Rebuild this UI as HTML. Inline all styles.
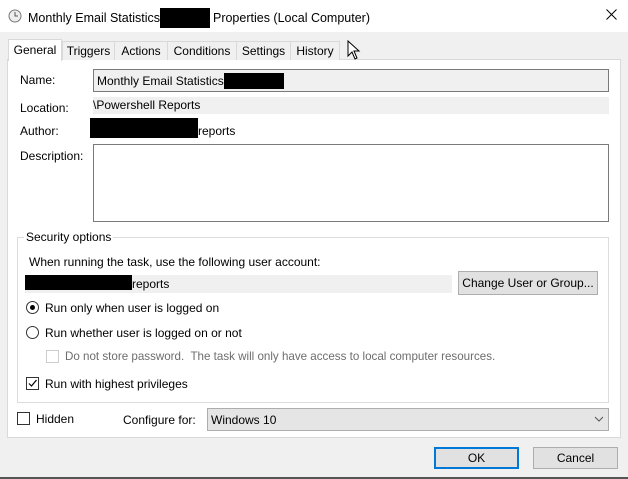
<!DOCTYPE html><html><head><style>
*{box-sizing:border-box;margin:0;padding:0}
body{width:628px;height:479px;background:#f0f0f0;font-family:"Liberation Sans",sans-serif;font-size:12px;color:#000;position:relative;overflow:hidden}
.a{position:absolute;white-space:nowrap}
.tab{position:absolute;top:41px;height:19px;border:1px solid #d9d9d9;border-bottom:none;background:#f0f0f0;text-align:center;line-height:18px}
.btn{position:absolute;background:#e1e1e1;border:1px solid #adadad;text-align:center}
.cb{position:absolute;width:13px;height:13px;border:1px solid #333;background:#fff}
.rb{position:absolute;width:13px;height:13px;border:1px solid #333;border-radius:50%;background:#fff}
</style></head><body>
<div class="a" style="left:0;top:0;width:628px;height:32px;background:#fff"></div>
<svg class="a" style="left:8px;top:9px" width="14" height="14"><circle cx="7" cy="7" r="6" fill="#eee" stroke="#777"/><path d="M7 3V7H10" stroke="#555" fill="none"/></svg>
<div class="a" style="left:28px;top:8px;font-size:12.5px">Monthly Email Statistics<span style="display:inline-block;width:50px;height:20px;background:#000;vertical-align:-6px;margin-right:3px"></span>Properties (Local Computer)</div>
<svg class="a" style="left:606px;top:9px" width="11" height="11"><path d="M0.5 0.5L10.5 10.5M10.5 0.5L0.5 10.5" stroke="#000" stroke-width="1"/></svg>
<div class="a" style="left:7px;top:59px;width:614px;height:379px;background:#fff;border:1px solid #d9d9d9"></div>
<div class="tab" style="left:62px;width:53px">Triggers</div>
<div class="tab" style="left:114px;width:54px">Actions</div>
<div class="tab" style="left:167px;width:70px">Conditions</div>
<div class="tab" style="left:236px;width:55px">Settings</div>
<div class="tab" style="left:290px;width:50px">History</div>
<div class="tab" style="left:8px;top:39px;height:22px;width:54px;background:#fff;line-height:20px">General</div>
<svg class="a" style="left:347px;top:40px" width="14" height="20"><path d="M1 1V16L5 12L8 19L10 18L7 11H12Z" fill="#fff" stroke="#000"/></svg>
<div class="a" style="left:20px;top:73px">Name:</div>
<div class="a" style="left:93px;top:69px;width:516px;height:23px;background:#f0f0f0;border:1px solid #7a7a7a;padding:3px 3px">Monthly Email Statistics<span style="display:inline-block;width:60px;height:16px;background:#000;vertical-align:-4px"></span></div>
<div class="a" style="left:20px;top:101px">Location:</div>
<div class="a" style="left:93px;top:97px;width:516px;height:17px;background:#f0f0f0;padding:1px 0">\Powershell Reports</div>
<div class="a" style="left:20px;top:124px">Author:</div>
<div class="a" style="left:90px;top:118px;width:108px;height:20px;background:#000"></div>
<div class="a" style="left:198px;top:124px">reports</div>
<div class="a" style="left:20px;top:149px">Description:</div>
<div class="a" style="left:93px;top:144px;width:516px;height:78px;border:1px solid #7a7a7a;background:#fff"></div>
<div class="a" style="left:17px;top:237px;width:592px;height:166px;border:1px solid #dcdcdc"></div>
<div class="a" style="left:24px;top:230px;background:#fff;padding:0 2px">Security options</div>
<div class="a" style="left:29px;top:255px">When running the task, use the following user account:</div>
<div class="a" style="left:25px;top:275px;width:427px;height:18px;background:#f0f0f0"></div>
<div class="a" style="left:25px;top:275px;width:107px;height:15px;background:#000"></div>
<div class="a" style="left:132px;top:277px">reports</div>
<div class="btn" style="left:458px;top:271px;width:140px;height:24px;line-height:22px">Change User or Group...</div>
<div class="rb" style="left:26px;top:301px"></div><div class="a" style="left:30px;top:305px;width:5px;height:5px;border-radius:50%;background:#000"></div>
<div class="a" style="left:45px;top:301px">Run only when user is logged on</div>
<div class="rb" style="left:26px;top:326px"></div>
<div class="a" style="left:45px;top:326px">Run whether user is logged on or not</div>
<div class="cb" style="left:46px;top:350px;border-color:#ccc"></div>
<div class="a" style="left:65px;top:350px;color:#6d6d6d;font-size:11.6px">Do not store password.&nbsp; The task will only have access to local computer resources.</div>
<div class="cb" style="left:26px;top:377px"></div>
<svg class="a" style="left:27px;top:378px" width="11" height="11"><path d="M2 5.5L4.5 8L9.5 2" stroke="#000" fill="none" stroke-width="1.2"/></svg>
<div class="a" style="left:45px;top:377px">Run with highest privileges</div>
<div class="cb" style="left:17px;top:412px"></div>
<div class="a" style="left:36px;top:412px">Hidden</div>
<div class="a" style="left:123px;top:413px">Configure for:</div>
<div class="a" style="left:207px;top:408px;width:402px;height:23px;background:#e5e5e5;border:1px solid #adadad;padding:4px 3px">Windows 10</div>
<svg class="a" style="left:594px;top:416px" width="10" height="7"><path d="M1 1L5 5L9 1" stroke="#555" fill="none"/></svg>
<div class="btn" style="left:434px;top:447px;width:85px;height:22px;border:2px solid #0078d7;line-height:18px">OK</div>
<div class="btn" style="left:533px;top:447px;width:85px;height:22px;line-height:20px">Cancel</div>
<div class="a" style="left:0;top:477px;width:628px;height:2px;background:#555"></div>
</body></html>
